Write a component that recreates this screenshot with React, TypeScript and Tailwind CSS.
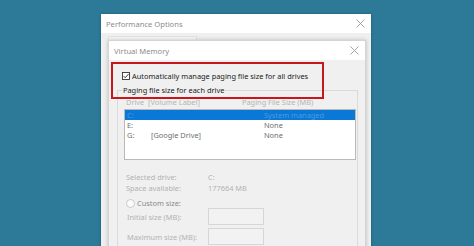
import React from "react"

const font = { fontFamily: '"Noto Sans", "Open Sans", sans-serif' }

function CloseIcon() {
  return (
    <svg width="9" height="9" viewBox="0 0 9 9" className="block">
      <path d="M0.5 0.5 L8.5 8.5 M8.5 0.5 L0.5 8.5" stroke="#9a9a9a" strokeWidth="0.9" fill="none" />
    </svg>
  )
}

function CheckBox() {
  return (
    <svg width="8" height="8" viewBox="0 0 8 8" className="block shrink-0">
      <rect x="0.5" y="0.5" width="7" height="7" fill="#fff" stroke="#333" strokeWidth="0.9" />
      <path d="M1.6 4.1 L3.2 5.7 L6.5 2.1" stroke="#222" strokeWidth="0.9" fill="none" />
    </svg>
  )
}

function Radio() {
  return (
    <svg width="9" height="9" viewBox="0 0 9 9" className="block shrink-0">
      <circle cx="4.5" cy="4.5" r="4" fill="#fbfbfb" stroke="#c4c4c4" strokeWidth="0.9" />
    </svg>
  )
}

const drives = [
  { letter: "C:", label: "", size: "System managed", selected: true },
  { letter: "E:", label: "", size: "None", selected: false },
  { letter: "G:", label: "[Google Drive]", size: "None", selected: false },
]

export default function App() {
  return (
    <div
      style={font}
      className="h-[246px] w-[474px] overflow-hidden bg-[#2c7a98] pl-[101px] pt-[14px] text-[7.4px] leading-[10px]"
    >
      <div className="flex h-[240px] w-[270px] flex-col bg-[#efefef] shadow-[0_0_3px_rgba(0,0,0,0.25)]">
        {/* Performance Options title bar */}
        <div className="flex h-[19px] items-center justify-between bg-white pl-[5px] pr-[6px]">
          <span className="text-[7.6px] text-[#8c8c8c]">Performance Options</span>
          <CloseIcon />
        </div>

        <div className="flex flex-1 flex-col pl-[7px] pr-[5px]">
          <div className="flex h-[7px] items-end">
            <div className="h-[4px] w-[89px] border-x border-t border-[#e2e2e2] bg-[#f6f6f6]" />
          </div>

          {/* Virtual Memory dialog */}
          <div className="flex w-[258px] flex-1 flex-col border border-[#d4d4d4] shadow-[0_0_4px_rgba(0,0,0,0.22)]">
            <div className="flex h-[19px] shrink-0 items-center justify-between bg-white pl-[5px] pr-[6px]">
              <span className="text-[7.6px] text-[#8c8c8c]">Virtual Memory</span>
              <CloseIcon />
            </div>

            <div className="relative flex flex-1 flex-col bg-[#f0f0f0] pt-[11px]">
              <div className="flex h-[10px] items-center gap-[2px] pl-[13px] text-[#1b1b1b]">
                <CheckBox />
                <span>Automatically manage paging file size for all drives</span>
              </div>

              <fieldset className="ml-[8px] mt-[4px] w-[241px] flex-1 border border-[#dadada] pb-0">
                <legend className="ml-[4px] px-[1px] text-[#1b1b1b]">Paging file size for each drive</legend>

                <div className="mt-[2px] flex pl-[8px] text-[#b4b4b4]">
                  <span className="w-[116px]">Drive&nbsp; [Volume Label]</span>
                  <span>Paging File Size (MB)</span>
                </div>

                <div className="ml-[6px] mt-[2px] h-[51px] w-[232px] border border-[#b9b9b9] bg-white">
                  {drives.map((d) => (
                    <div
                      key={d.letter}
                      className={
                        d.selected
                          ? "flex h-[10px] items-center bg-[#0a78d6] pl-[2px] text-[#4d9ae0]"
                          : "flex h-[10px] items-center pl-[2px] text-[#6e6e6e]"
                      }
                    >
                      <span className="w-[24px]">{d.letter}</span>
                      <span className="w-[113px]">{d.label}</span>
                      <span>{d.size}</span>
                    </div>
                  ))}
                </div>

                <div className="mt-[12px] grid grid-cols-[82px_1fr] pl-[8px] leading-[11px] text-[#b2b2b2]">
                  <span>Selected drive:</span>
                  <span>C:</span>
                  <span>Space available:</span>
                  <span>177664 MB</span>
                </div>

                <div className="mt-[4px] flex h-[10px] items-center gap-[2px] pl-[8px] text-[#8a8a8a]">
                  <Radio />
                  <span>Custom size:</span>
                </div>

                <div className="flex h-[17px] items-center pl-[9px] text-[#b2b2b2]">
                  <span className="w-[81px]">Initial size (MB):</span>
                  <div className="h-[17px] w-[56px] border border-[#d6d6d6] bg-[#f2f2f2]" />
                </div>

                <div className="mt-[3px] flex h-[17px] items-center pl-[9px] text-[#b2b2b2]">
                  <span className="w-[81px]">Maximum size (MB):</span>
                  <div className="h-[17px] w-[56px] border border-[#d6d6d6] bg-[#f2f2f2]" />
                </div>
              </fieldset>

              {/* highlight annotation */}
              <div className="absolute left-[2px] top-[2px] h-[37px] w-[213px] border-2 border-[#c8161d]" />
            </div>
          </div>
        </div>
      </div>
    </div>
  )
}
